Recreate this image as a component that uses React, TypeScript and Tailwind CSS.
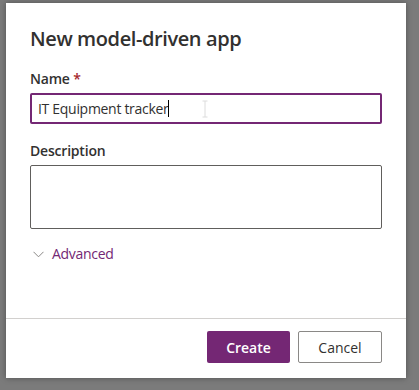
export default function App() {
  const font = { fontFamily: '"Open Sans", "Noto Sans", sans-serif' };
  return (
    <div className="w-[419px] h-[390px] bg-[#7b7b7b] pl-[6px] pt-[3px]" style={font}>
      <div className="w-[400px] h-[375px] bg-white shadow-[0_0_6px_rgba(0,0,0,0.35)] flex flex-col">
        <div className="flex-1 px-6 pt-[22px]">
          <h1 className="text-[20px] leading-[28px] font-semibold text-[#323130] tracking-[-0.4px]">
            New model-driven app
          </h1>

          <label className="block mt-[16px] text-[14px] leading-[20px] font-semibold text-[#323130] tracking-[-0.2px]">
            Name <span className="text-[#a4262c]">*</span>
          </label>
          <div className="relative mt-[4px] h-[31px] border-2 border-[#742774] rounded-[2px] flex items-center px-[6px] text-[14px] text-[#323130] tracking-[-0.3px]">
            <span>IT Equipment tracker</span>
            <span className="w-px h-[17px] bg-black" />
            <svg className="absolute left-[170px] top-[5px]" width="6" height="18" viewBox="0 0 6 18">
              <path d="M0.5 1H5.5M3 1V17M0.5 17H5.5" stroke="#dcdcdc" strokeWidth="1" fill="none" />
            </svg>
          </div>

          <label className="block mt-[17px] text-[14px] leading-[20px] font-semibold text-[#323130] tracking-[-0.2px]">
            Description
          </label>
          <div className="mt-[4px] h-[64px] border border-[#605e5c] rounded-[2px]" />

          <div className="mt-[15px] flex items-center gap-[8px] pl-[3px] text-[14px] leading-[20px] text-[#742774] tracking-[-0.3px]">
            <svg width="11" height="7" viewBox="0 0 11 7">
              <path d="M0.5 0.8L5.5 5.8L10.5 0.8" stroke="#8a8886" strokeWidth="1" fill="none" />
            </svg>
            <span>Advanced</span>
          </div>
        </div>

        <div className="border-t border-[#d2d0ce] flex justify-end gap-2 px-6 pt-[12px] pb-[15px]">
          <button className="w-[83px] h-[32px] rounded-[2px] bg-[#742774] text-white text-[14px] font-semibold">
            Create
          </button>
          <button className="w-[84px] h-[32px] rounded-[2px] border border-[#8a8886] bg-white text-[#323130] text-[14px]">
            Cancel
          </button>
        </div>
      </div>
    </div>
  );
}
